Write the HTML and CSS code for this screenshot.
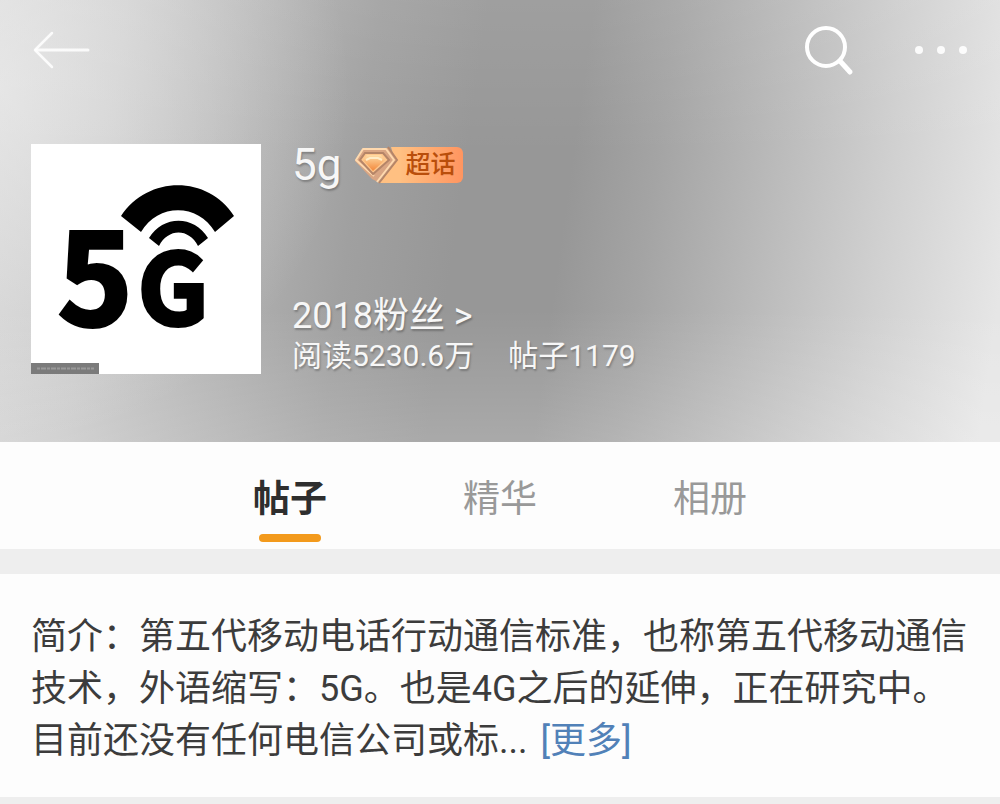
FILE: index.html
```
<!DOCTYPE html>
<html lang="zh-CN">
<head>
<meta charset="utf-8">
<meta name="viewport" content="width=device-width, initial-scale=1">
<title>5g 超话</title>
<link rel="stylesheet" href="styles.css">
</head>
<body>
<header class="banner">
  <div class="toolbar">
    <button class="icon-button" type="button" aria-label="返回">
      <svg width="60" height="44" viewBox="0 0 60 44" fill="none" stroke="#fff" stroke-opacity="0.85" stroke-linecap="round" stroke-linejoin="round"><path d="M57 22H5" stroke-width="3"/><path d="M21 5L4 22l17 17" stroke-width="2.5"/></svg>
    </button>
    <div class="tools">
      <button class="icon-button" type="button" aria-label="搜索">
        <svg width="52" height="52" viewBox="0 0 52 52" fill="none" stroke="#fff" stroke-linecap="round"><circle cx="23" cy="23" r="19" stroke-width="4"/><path d="M37 37l10 11" stroke-width="5"/></svg>
      </button>
      <button class="icon-button" type="button" aria-label="更多操作">
        <svg width="56" height="12" viewBox="0 0 56 12" fill="#fff" fill-opacity="0.9"><circle cx="6" cy="6" r="4"/><circle cx="28" cy="6" r="4"/><circle cx="50" cy="6" r="4"/></svg>
      </button>
    </div>
  </div>
  <div class="profile">
    <svg class="avatar" viewBox="0 0 230 230" role="img" aria-label="5G">
      <rect width="230" height="230" fill="#fff"/>
      <path d="M90 72C117 31 177 31 203 72L184 88C167 59 127 59 110 88Z"/>
      <path d="M118 94C132 71 163 71 177 94L167 102C158 84 137 84 128 102Z"/>
      <text class="logo-letter logo-five" x="27" y="181">5</text>
      <text class="logo-letter logo-g" x="107" y="181">G</text>
      <rect y="219" width="68" height="11" fill="#7b7b7b"/>
      <path d="M6 224.500H63" stroke="#999" stroke-width="2" stroke-dasharray="3 1 5 1"/>
    </svg>
    <div class="details">
      <div class="title-row">
        <h1 class="title">5g</h1>
        <span class="badge">
          <svg class="gem" width="48" height="38" viewBox="0 0 48 38" fill="none">
            <defs>
              <linearGradient id="gem-fill" x1="0" y1="0" x2="0" y2="1"><stop offset="0" stop-color="#ffdca6"/><stop offset="1" stop-color="#f2873a"/></linearGradient>
            </defs>
            <path d="M38 1H48V37H25L42 15Z" fill="#ffc082"/>
            <path d="M10 2H35L43 14L25 36L19 33L2 15Z" fill="#d9a583"/>
            <path d="M21 30L3 14L10 3H33L41 14L24 36" stroke="#ffd9ae" stroke-width="2" stroke-linejoin="round"/>
            <path d="M35 1L44 14L26 37" stroke="#b58568" stroke-width="2"/>
            <path d="M20 28L7 14L12 7H30L36 14Z" stroke="#b58568" stroke-width="2" fill="#ffc78c"/>
            <path d="M20 25L10 14L14 9H28L32 14Z" fill="url(#gem-fill)"/>
            <path d="M13 14L17 12H25L29 14" stroke="#ffecc7" stroke-width="2"/>
          </svg>
          <span class="badge-text">超话</span>
        </span>
      </div>
      <div class="stats">
        <a class="fans" href="#fans">2018粉丝 &gt;</a>
        <div class="counts"><span>阅读5230.6万</span><span>帖子1179</span></div>
      </div>
    </div>
  </div>
</header>
<nav class="tabs">
  <a class="tab tab-active" href="#posts" aria-current="page">帖子</a>
  <a class="tab" href="#best">精华</a>
  <a class="tab" href="#album">相册</a>
</nav>
<main class="intro">
  <p class="intro-text">简介：第五代移动电话行动通信标准，也称第五代移动通信技术，外语缩写：5G。也是4G之后的延伸，正在研究中。<br>目前还没有任何电信公司或标... <a class="more" href="#more">[更多]</a></p>
</main>
</body>
</html>
```
FILE: styles.css
```
* {
  box-sizing: border-box;
}

body {
  margin: 0;
  background: #eee;
  font-family: Roboto, "Noto Sans CJK SC", sans-serif;
  color: #3c3c3c;
}

a {
  color: inherit;
  text-decoration: none;
}

.banner {
  padding: 20px 31px 68px;
  background:
    radial-gradient(ellipse 35% 80% at 0% 20%, rgba(240, 240, 240, 0.6), rgba(235, 235, 235, 0)),
    linear-gradient(180deg, rgba(255, 255, 255, 0.08) 0%, rgba(255, 255, 255, 0) 35%, rgba(255, 255, 255, 0) 70%, rgba(255, 255, 255, 0.18) 100%),
    linear-gradient(98deg, #d6d6d6 0%, #c8c8c8 12%, #b2b2b2 25%, #a0a0a0 36%, #979797 46%, #979797 56%, #a4a4a4 64%, #bababa 75%, #d0d0d0 86%, #e6e6e6 98%);
  color: #f7f7f7;
}

.toolbar {
  display: flex;
  align-items: center;
  justify-content: space-between;
  height: 60px;
}

.tools {
  display: flex;
  align-items: center;
  gap: 58px;
}

.icon-button {
  display: flex;
  padding: 0;
  border: 0;
  background: none;
  cursor: pointer;
}

.profile {
  display: flex;
  gap: 31px;
  margin-top: 64px;
}

.avatar {
  flex: none;
  width: 230px;
  height: 230px;
}

.logo-letter {
  font-family: "Noto Sans CJK SC", sans-serif;
  font-weight: 700;
  stroke: #000;
  stroke-width: 4px;
}

.logo-five {
  font-size: 126px;
}

.logo-g {
  font-size: 98px;
}

.details {
  display: flex;
  flex-direction: column;
  justify-content: space-between;
  text-shadow: 1px 2px 2px rgba(0, 0, 0, 0.25);
}

.title-row {
  display: flex;
  align-items: center;
  gap: 12px;
  height: 42px;
}

.title {
  margin: 0;
  font-size: 44px;
  font-weight: 400;
  line-height: 42px;
}

.badge {
  display: flex;
  align-items: center;
  height: 36px;
  padding-right: 8px;
  border-radius: 6px;
  background: linear-gradient(90deg, transparent 46px, #ffc082 46px, #ff9560 100%);
}

.gem {
  flex: none;
}

.badge-text {
  margin-left: 4px;
  font-size: 25px;
  font-weight: 500;
  line-height: 36px;
  color: #b94e0b;
  text-shadow: none;
}

.stats {
  display: flex;
  flex-direction: column;
}

.fans {
  font-size: 36px;
  line-height: 44px;
}

.counts {
  display: flex;
  gap: 34px;
  font-size: 30px;
  line-height: 36px;
}

.tabs {
  display: grid;
  grid-template-columns: repeat(3, 21%);
  justify-content: center;
  height: 107px;
  background: #fdfdfd;
}

.tab {
  display: flex;
  flex-direction: column;
  align-items: center;
  padding-top: 32px;
  font-size: 37px;
  line-height: 52px;
  color: #999;
}

.tab-active {
  font-weight: 700;
  color: #2e2e2e;
}

.tab-active::after {
  content: "";
  width: 62px;
  height: 8px;
  margin-top: 8px;
  border-radius: 4px;
  background: #f39a1c;
}

.intro {
  margin-top: 25px;
  padding: 37px 31px 30px;
  background: #fdfdfd;
}

.intro-text {
  margin: 0;
  font-size: 36px;
  line-height: 52px;
}

.more {
  margin-left: 4px;
  color: #5181b8;
}
```
